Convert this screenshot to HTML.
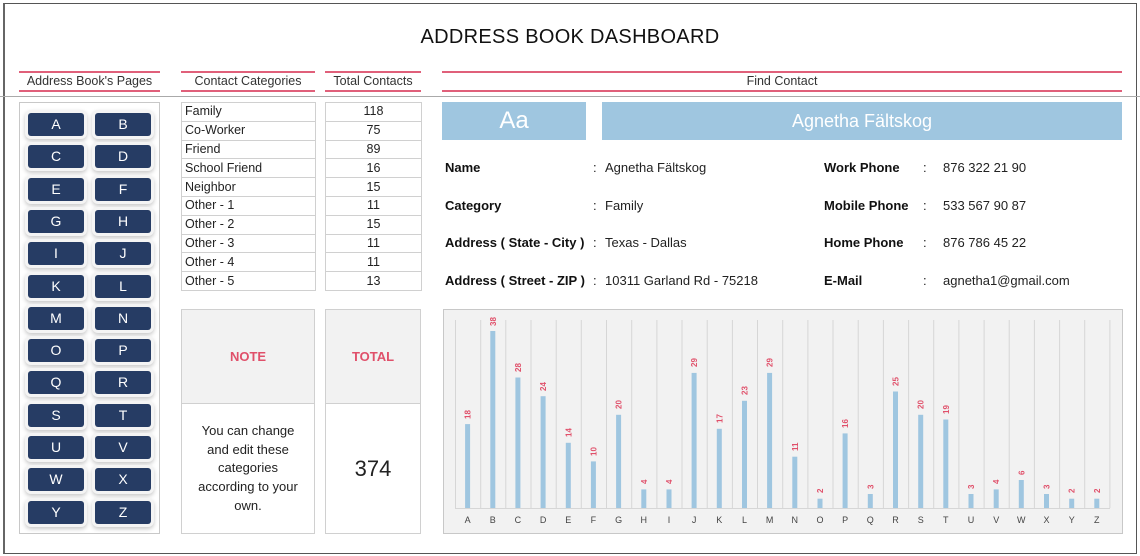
<!DOCTYPE html>
<html><head><meta charset="utf-8"><style>
*{margin:0;padding:0;box-sizing:border-box}
body{width:1140px;height:556px;background:#fff;font-family:"Liberation Sans",sans-serif;color:#222;position:relative;overflow:hidden}
.abs{position:absolute}
.frame{left:3px;top:3px;width:1134px;height:551px;border:1px solid #555;border-left:2px solid #666}
.title{left:0;width:1140px;top:26px;text-align:center;font-size:20px;color:#111;letter-spacing:0.3px}
.hdr{top:71px;height:21px;border-top:2px solid #e0607a;border-bottom:2px solid #e0607a;font-size:12.5px;color:#333;text-align:center;line-height:17px}
.sep{left:0;top:96px;width:1140px;height:1px;background:#aaa}
.panel{border:1px solid #c8c8c8}
.btn{width:56px;height:23px;background:#263c64;border-radius:3px;color:#fff;font-size:14px;text-align:center;line-height:23px;box-shadow:0 0 0 3px #f4f4f4,0 2px 4px 3px #c8c8c8}
table{border-collapse:collapse}
td{border:1px solid #d0d0d0;height:18.8px;font-size:12.5px;padding:0 3px;line-height:17px}
.box{border:1px solid #d0d0d0}
.lab{font-size:13px;font-weight:bold;color:#111}
.val{font-size:13px;color:#222}
</style></head><body>
<div class="abs frame"></div>
<div class="abs title">ADDRESS BOOK DASHBOARD</div>
<div class="abs hdr" style="left:19px;width:141px">Address Book's Pages</div>
<div class="abs hdr" style="left:181px;width:134px">Contact Categories</div>
<div class="abs hdr" style="left:325px;width:96px">Total Contacts</div>
<div class="abs hdr" style="left:442px;width:680px">Find Contact</div>
<div class="abs sep"></div>

<div class="abs panel" style="left:19px;top:102px;width:141px;height:432px"></div>
<div class="abs btn" style="left:28px;top:113px">A</div><div class="abs btn" style="left:95px;top:113px">B</div>
<div class="abs btn" style="left:28px;top:145px">C</div><div class="abs btn" style="left:95px;top:145px">D</div>
<div class="abs btn" style="left:28px;top:178px">E</div><div class="abs btn" style="left:95px;top:178px">F</div>
<div class="abs btn" style="left:28px;top:210px">G</div><div class="abs btn" style="left:95px;top:210px">H</div>
<div class="abs btn" style="left:28px;top:242px">I</div><div class="abs btn" style="left:95px;top:242px">J</div>
<div class="abs btn" style="left:28px;top:275px">K</div><div class="abs btn" style="left:95px;top:275px">L</div>
<div class="abs btn" style="left:28px;top:307px">M</div><div class="abs btn" style="left:95px;top:307px">N</div>
<div class="abs btn" style="left:28px;top:339px">O</div><div class="abs btn" style="left:95px;top:339px">P</div>
<div class="abs btn" style="left:28px;top:371px">Q</div><div class="abs btn" style="left:95px;top:371px">R</div>
<div class="abs btn" style="left:28px;top:404px">S</div><div class="abs btn" style="left:95px;top:404px">T</div>
<div class="abs btn" style="left:28px;top:436px">U</div><div class="abs btn" style="left:95px;top:436px">V</div>
<div class="abs btn" style="left:28px;top:468px">W</div><div class="abs btn" style="left:95px;top:468px">X</div>
<div class="abs btn" style="left:28px;top:501px">Y</div><div class="abs btn" style="left:95px;top:501px">Z</div>

<table class="abs" style="left:181px;top:102px;width:135px">
<tr><td>Family</td></tr><tr><td>Co-Worker</td></tr><tr><td>Friend</td></tr><tr><td>School Friend</td></tr><tr><td>Neighbor</td></tr><tr><td>Other - 1</td></tr><tr><td>Other - 2</td></tr><tr><td>Other - 3</td></tr><tr><td>Other - 4</td></tr><tr><td>Other - 5</td></tr>
</table>
<table class="abs" style="left:325px;top:102px;width:97px;text-align:center">
<tr><td>118</td></tr><tr><td>75</td></tr><tr><td>89</td></tr><tr><td>16</td></tr><tr><td>15</td></tr><tr><td>11</td></tr><tr><td>15</td></tr><tr><td>11</td></tr><tr><td>11</td></tr><tr><td>13</td></tr>
</table>

<div class="abs box" style="left:181px;top:309px;width:134px;height:225px">
<div style="height:94px;background:#f2f2f2;border-bottom:1px solid #d0d0d0;color:#e0506a;font-weight:bold;font-size:13px;text-align:center;line-height:94px">NOTE</div>
<div style="text-align:center;font-size:13px;line-height:18.7px;padding:18px 8px 0">You can change and edit these categories according to your own.</div>
</div>
<div class="abs box" style="left:325px;top:309px;width:96px;height:225px">
<div style="height:94px;background:#f2f2f2;border-bottom:1px solid #d0d0d0;color:#e0506a;font-weight:bold;font-size:13px;text-align:center;line-height:94px">TOTAL</div>
<div style="text-align:center;font-size:22px;line-height:130px">374</div>
</div>

<div class="abs" style="left:442px;top:102px;width:144px;height:38px;background:#9fc6e0;color:#fff;font-size:24px;text-align:center;line-height:38px">Aa</div>
<div class="abs" style="left:602px;top:102px;width:520px;height:38px;background:#9fc6e0;color:#fff;font-size:18px;text-align:center;line-height:38px">Agnetha Fältskog</div>

<div class="abs lab" style="left:445px;top:160px">Name</div><div class="abs val" style="left:593px;top:160px">:</div><div class="abs val" style="left:605px;top:160px">Agnetha Fältskog</div>
<div class="abs lab" style="left:445px;top:198px">Category</div><div class="abs val" style="left:593px;top:198px">:</div><div class="abs val" style="left:605px;top:198px">Family</div>
<div class="abs lab" style="left:445px;top:235px">Address ( State - City )</div><div class="abs val" style="left:593px;top:235px">:</div><div class="abs val" style="left:605px;top:235px">Texas - Dallas</div>
<div class="abs lab" style="left:445px;top:273px">Address ( Street - ZIP )</div><div class="abs val" style="left:593px;top:273px">:</div><div class="abs val" style="left:605px;top:273px">10311 Garland Rd - 75218</div>
<div class="abs lab" style="left:824px;top:160px">Work Phone</div><div class="abs val" style="left:923px;top:160px">:</div><div class="abs val" style="left:943px;top:160px">876 322 21 90</div>
<div class="abs lab" style="left:824px;top:198px">Mobile Phone</div><div class="abs val" style="left:923px;top:198px">:</div><div class="abs val" style="left:943px;top:198px">533 567 90 87</div>
<div class="abs lab" style="left:824px;top:235px">Home Phone</div><div class="abs val" style="left:923px;top:235px">:</div><div class="abs val" style="left:943px;top:235px">876 786 45 22</div>
<div class="abs lab" style="left:824px;top:273px">E-Mail</div><div class="abs val" style="left:923px;top:273px">:</div><div class="abs val" style="left:943px;top:273px">agnetha1@gmail.com</div>

<svg class="abs" style="left:0;top:0" width="1140" height="556" font-family="Liberation Sans, sans-serif">
<rect x="443.5" y="309.5" width="679" height="224" fill="#f2f2f2" stroke="#c8c8c8"/>
<g stroke="#d6d6d6" stroke-width="1">
<path d="M455.5 320V508M480.7 320V508M505.8 320V508M531 320V508M556.2 320V508M581.3 320V508M606.5 320V508M631.7 320V508M656.9 320V508M682 320V508M707.2 320V508M732.4 320V508M757.5 320V508M782.7 320V508M807.9 320V508M833 320V508M858.2 320V508M883.4 320V508M908.6 320V508M933.7 320V508M958.9 320V508M984.1 320V508M1009.2 320V508M1034.4 320V508M1059.6 320V508M1084.7 320V508M1109.9 320V508"/>
<path d="M455 508.5H1110"/>
</g>
<g fill="#9fc6e0">
<rect x="465.1" y="424.1" width="5" height="83.9"/>
<rect x="490.3" y="331" width="5" height="177"/>
<rect x="515.4" y="377.5" width="5" height="130.5"/>
<rect x="540.6" y="396.2" width="5" height="111.8"/>
<rect x="565.8" y="442.8" width="5" height="65.2"/>
<rect x="590.9" y="461.4" width="5" height="46.6"/>
<rect x="616.1" y="414.8" width="5" height="93.2"/>
<rect x="641.3" y="489.4" width="5" height="18.6"/>
<rect x="666.5" y="489.4" width="5" height="18.6"/>
<rect x="691.6" y="372.9" width="5" height="135.1"/>
<rect x="716.8" y="428.8" width="5" height="79.2"/>
<rect x="742" y="400.8" width="5" height="107.2"/>
<rect x="767.1" y="372.9" width="5" height="135.1"/>
<rect x="792.3" y="456.7" width="5" height="51.3"/>
<rect x="817.5" y="498.7" width="5" height="9.3"/>
<rect x="842.6" y="433.4" width="5" height="74.6"/>
<rect x="867.8" y="494" width="5" height="14"/>
<rect x="893" y="391.5" width="5" height="116.5"/>
<rect x="918.2" y="414.8" width="5" height="93.2"/>
<rect x="943.3" y="419.5" width="5" height="88.5"/>
<rect x="968.5" y="494" width="5" height="14"/>
<rect x="993.7" y="489.4" width="5" height="18.6"/>
<rect x="1018.8" y="480" width="5" height="28"/>
<rect x="1044" y="494" width="5" height="14"/>
<rect x="1069.2" y="498.7" width="5" height="9.3"/>
<rect x="1094.3" y="498.7" width="5" height="9.3"/>
</g>
<g fill="#e0506a" font-size="8" font-weight="bold">
<text transform="translate(470.6,419) rotate(-90)">18</text>
<text transform="translate(495.8,326) rotate(-90)">38</text>
<text transform="translate(520.9,372) rotate(-90)">28</text>
<text transform="translate(546.1,391) rotate(-90)">24</text>
<text transform="translate(571.3,437) rotate(-90)">14</text>
<text transform="translate(596.4,456) rotate(-90)">10</text>
<text transform="translate(621.6,409) rotate(-90)">20</text>
<text transform="translate(646.8,484) rotate(-90)">4</text>
<text transform="translate(672,484) rotate(-90)">4</text>
<text transform="translate(697.1,367) rotate(-90)">29</text>
<text transform="translate(722.3,423) rotate(-90)">17</text>
<text transform="translate(747.5,395) rotate(-90)">23</text>
<text transform="translate(772.6,367) rotate(-90)">29</text>
<text transform="translate(797.8,451) rotate(-90)">11</text>
<text transform="translate(823,493) rotate(-90)">2</text>
<text transform="translate(848.1,428) rotate(-90)">16</text>
<text transform="translate(873.3,489) rotate(-90)">3</text>
<text transform="translate(898.5,386) rotate(-90)">25</text>
<text transform="translate(923.7,409) rotate(-90)">20</text>
<text transform="translate(948.8,414) rotate(-90)">19</text>
<text transform="translate(974,489) rotate(-90)">3</text>
<text transform="translate(999.2,484) rotate(-90)">4</text>
<text transform="translate(1024.3,475) rotate(-90)">6</text>
<text transform="translate(1049.5,489) rotate(-90)">3</text>
<text transform="translate(1074.7,493) rotate(-90)">2</text>
<text transform="translate(1099.8,493) rotate(-90)">2</text>
</g>
<g fill="#444" font-size="9" text-anchor="middle">
<text x="467.6" y="523">A</text><text x="492.8" y="523">B</text><text x="517.9" y="523">C</text><text x="543.1" y="523">D</text><text x="568.3" y="523">E</text><text x="593.4" y="523">F</text><text x="618.6" y="523">G</text><text x="643.8" y="523">H</text><text x="669" y="523">I</text><text x="694.1" y="523">J</text><text x="719.3" y="523">K</text><text x="744.5" y="523">L</text><text x="769.6" y="523">M</text><text x="794.8" y="523">N</text><text x="820" y="523">O</text><text x="845.1" y="523">P</text><text x="870.3" y="523">Q</text><text x="895.5" y="523">R</text><text x="920.7" y="523">S</text><text x="945.8" y="523">T</text><text x="971" y="523">U</text><text x="996.2" y="523">V</text><text x="1021.3" y="523">W</text><text x="1046.5" y="523">X</text><text x="1071.7" y="523">Y</text><text x="1096.8" y="523">Z</text>
</g>
</svg>
</body></html>
